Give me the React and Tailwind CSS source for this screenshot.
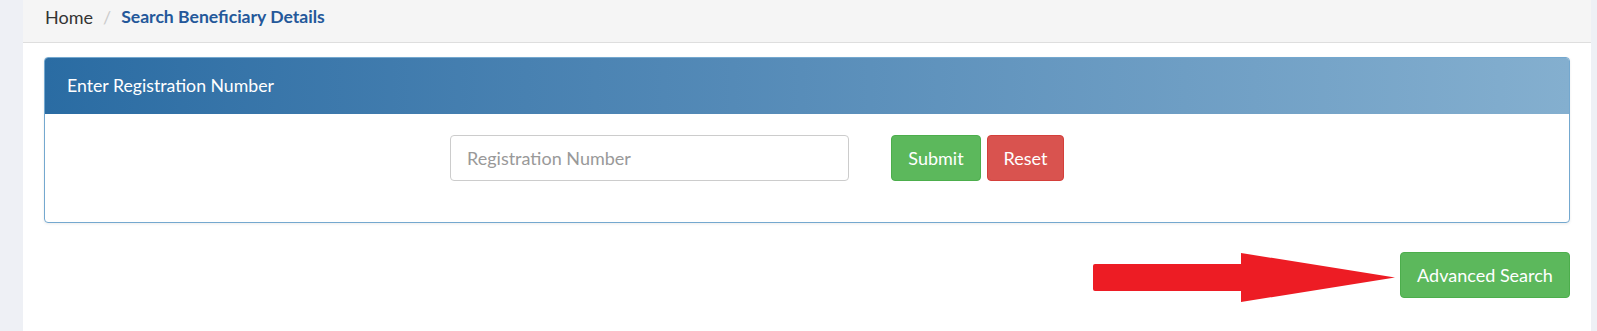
export default function App() {
  const font = { fontFamily: 'Lato, "Open Sans", sans-serif' };
  return (
    <div className="w-[1597px] h-[331px] flex bg-[#eef0f5] overflow-hidden" style={font}>
      <div className="w-[23px] shrink-0" />
      <div className="w-[1568px] shrink-0 bg-white flex flex-col">
        <div className="h-[43px] shrink-0 bg-[#f5f5f5] border-b border-[#dedede] flex items-center pl-[22px] pb-[8px] text-[18px]">
          <span className="text-[#333]">Home</span>
          <span className="text-[#ccc] mx-[10px]">/</span>
          <span className="text-[#24589a] font-bold text-[17.6px]">Search Beneficiary Details</span>
        </div>
        <div className="ml-[21px] mr-[21px] mt-[14px] border border-[#74a8cf] rounded-[4px] shadow-[0_1px_3px_rgba(0,0,0,0.08)] overflow-hidden">
          <div className="h-[56px] bg-gradient-to-r from-[#2a6ca3] to-[#84afcf] flex items-center pl-[22px] text-white text-[17.7px]">
            Enter Registration Number
          </div>
          <div className="h-[108px] flex items-start pt-[21px] pl-[405px]">
            <div className="w-[399px] h-[46px] border border-[#ccc] rounded-[4px] flex items-center pl-[16px] text-[#999] text-[18px]">
              Registration Number
            </div>
            <button className="ml-[42px] w-[90px] h-[46px] bg-[#5cb85c] border border-[#4cae4c] rounded-[4px] text-white text-[18px]">
              Submit
            </button>
            <button className="ml-[6px] w-[77px] h-[46px] bg-[#d9534f] border border-[#d43f3a] rounded-[4px] text-white text-[18px]">
              Reset
            </button>
          </div>
        </div>
        <div className="flex justify-end items-start mr-[21px] mt-[29px]">
          <svg width="302" height="50" viewBox="0 0 302 50" className="mr-[5px] mt-[1px]">
            <rect x="0" y="11" width="150" height="27" rx="2" fill="#ed1c24" />
            <polygon points="148,0 302,24.5 148,49" fill="#ed1c24" />
          </svg>
          <button className="w-[170px] h-[46px] bg-[#5cb85c] border border-[#4cae4c] rounded-[4px] text-white text-[18px]">
            Advanced Search
          </button>
        </div>
      </div>
      <div className="flex-1" />
    </div>
  );
}
